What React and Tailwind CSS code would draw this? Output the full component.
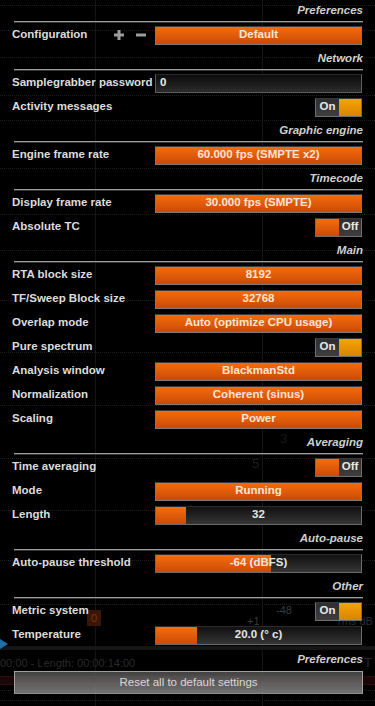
import React from 'react';

// Preferences panel drawn over a dimmed analyzer view.
const GRID_Y = [5, 30, 57, 95, 120, 168, 214, 250, 300, 352, 405, 458, 510, 560, 604, 690, 700];

function Backdrop() {
  return (
    <div className="pointer-events-none absolute inset-0 font-normal">
      {GRID_Y.map((y) => (
        <div key={y} className="absolute inset-x-0 border-t border-dotted border-[#1d1d1d]" style={{ top: y }} />
      ))}
      <div className="absolute inset-y-0 left-[95px] border-l border-[#141414]" />
      <div className="absolute inset-y-0 left-[262px] border-l border-[#161616]" />
      <span className="absolute left-[252px] top-[457px] text-[13px] text-[#1e1e1e]">5</span>
      <span className="absolute left-[280px] top-[432px] text-[13px] text-[#161616]">3</span>
      <span className="absolute left-[276px] top-[605px] text-[11px] text-[#3a3a3a]">-48</span>
      <span className="absolute left-[247px] top-[616px] text-[11px] text-[#3a3a3a]">+1</span>
      <span className="absolute left-[338px] top-[616px] text-[11px] text-[#2c2c3a]">rms dB</span>
      <div className="absolute left-[87px] top-[610px] flex h-[16px] w-[14px] items-center justify-center bg-[#3a1606] text-[11px] text-[#7a3410]">0</div>
      <div className="absolute inset-x-0 top-[646px] h-[4px] bg-[#161616]" />
      <div className="absolute left-0 top-[639px] h-0 w-0 border-y-[5px] border-l-[8px] border-y-transparent border-l-[#1f6fa8]" />
      <span className="absolute left-0 top-[658px] text-[11px] text-[#2a2a2a]">00:00 - Length: 00:00:14:00</span>
      <span className="absolute left-[364px] top-[656px] text-[13px] text-[#262626]">T</span>
      <div className="absolute inset-x-0 top-[676px] h-[9px] border-y border-dotted border-[#3a1414] bg-[#1a0606]" />
    </div>
  );
}

function Header({ title, first }) {
  return (
    <div className={`ml-[2px] -mr-px flex flex-col justify-end ${first ? 'h-[23px]' : 'h-[24px]'}`}>
      <div className="text-right italic leading-none text-[#cfcfcf]">{title}</div>
      <div className="mt-[5px] h-px bg-[#9a9a9a]" />
      <div className="h-px bg-[#3a3a3a]" />
    </div>
  );
}

function Row({ label, extra, children }) {
  return (
    <div className="flex h-6 items-center">
      <div className="flex w-[143px] shrink-0 items-center pr-2">
        <span className="whitespace-nowrap text-[#dcdcdc]">{label}</span>
        {extra}
      </div>
      <div className="flex min-w-0 flex-1 items-center">{children}</div>
    </div>
  );
}

function Select({ value }) {
  return (
    <div className="flex h-[19px] w-full items-center justify-center border border-[#7c7c7c] border-t-[#3c3c3c] bg-linear-to-b from-[#f66c0e] to-[#c94a05] text-[#fce6d6]">
      {value}
    </div>
  );
}

function Slider({ value, fill }) {
  return (
    <div className="relative flex h-[19px] w-full items-center justify-center border border-[#6a6a6a] border-t-[#2c2c2c] bg-linear-to-b from-[#121212] to-[#353535] text-[#e6e6e6]">
      <div className="absolute inset-y-0 left-0 bg-linear-to-b from-[#f66c0e] to-[#cc4c06]" style={{ width: fill }} />
      <span className="relative">{value}</span>
    </div>
  );
}

function Toggle({ on }) {
  return (
    <div className="ml-auto flex h-[19px] w-[47px] border border-[#6e6e6e] border-t-[#3a3a3a]">
      {on ? (
        <>
          <div className="flex w-[23px] items-center justify-center bg-linear-to-b from-[#2e2e2e] to-[#3e3e3e] text-[#e8e8e8]">On</div>
          <div className="flex-1 bg-linear-to-b from-[#f4a40a] to-[#d88400]" />
        </>
      ) : (
        <>
          <div className="w-[23px] bg-linear-to-b from-[#f66c0e] to-[#cc4c06]" />
          <div className="flex flex-1 items-center justify-center bg-linear-to-b from-[#2e2e2e] to-[#3e3e3e] text-[#e8e8e8]">Off</div>
        </>
      )}
    </div>
  );
}

function PlusMinus() {
  return (
    <div className="ml-auto flex items-center gap-[12px] pr-px">
      <svg width="10" height="10" viewBox="0 0 10 10">
        <path d="M5 0v10M0 5h10" stroke="#9c9c9c" strokeWidth="3" />
      </svg>
      <svg width="10" height="10" viewBox="0 0 10 10">
        <path d="M0 5h10" stroke="#9c9c9c" strokeWidth="3" />
      </svg>
    </div>
  );
}

export default function App() {
  return (
    <div className="relative h-[706px] w-[375px] overflow-hidden bg-black font-['Liberation_Sans',Arial,sans-serif] text-[11.5px] font-bold leading-none">
      <Backdrop />
      <div className="relative flex flex-col pl-3 pr-[13px]">
        <Header title="Preferences" first />
        <Row label="Configuration" extra={<PlusMinus />}>
          <Select value="Default" />
        </Row>

        <Header title="Network" />
        <Row label="Samplegrabber password">
          <div className="flex h-[19px] w-full items-center border border-[#5c5c5c] border-t-[#2a2a2a] bg-linear-to-b from-[#0c0c0c] to-[#2c2c2c] pl-1 text-[#eeeeee]">
            0
          </div>
        </Row>
        <Row label="Activity messages">
          <Toggle on />
        </Row>

        <Header title="Graphic engine" />
        <Row label="Engine frame rate">
          <Select value="60.000 fps (SMPTE x2)" />
        </Row>

        <Header title="Timecode" />
        <Row label="Display frame rate">
          <Select value="30.000 fps (SMPTE)" />
        </Row>
        <Row label="Absolute TC">
          <Toggle on={false} />
        </Row>

        <Header title="Main" />
        <Row label="RTA block size">
          <Select value="8192" />
        </Row>
        <Row label="TF/Sweep Block size">
          <Select value="32768" />
        </Row>
        <Row label="Overlap mode">
          <Select value="Auto (optimize CPU usage)" />
        </Row>
        <Row label="Pure spectrum">
          <Toggle on />
        </Row>
        <Row label="Analysis window">
          <Select value="BlackmanStd" />
        </Row>
        <Row label="Normalization">
          <Select value="Coherent (sinus)" />
        </Row>
        <Row label="Scaling">
          <Select value="Power" />
        </Row>

        <Header title="Averaging" />
        <Row label="Time averaging">
          <Toggle on={false} />
        </Row>
        <Row label="Mode">
          <Select value="Running" />
        </Row>
        <Row label="Length">
          <Slider value="32" fill={30} />
        </Row>

        <Header title="Auto-pause" />
        <Row label="Auto-pause threshold">
          <Slider value="-64 (dBFS)" fill={115} />
        </Row>

        <Header title="Other" />
        <Row label="Metric system">
          <Toggle on />
        </Row>
        <Row label="Temperature">
          <Slider value="20.0 (° c)" fill={41} />
        </Row>

        <div className="ml-[2px] -mr-px flex h-[24px] items-end justify-end pb-[6px] italic text-[#cfcfcf]">Preferences</div>
        <div className="ml-[2px] -mr-px flex h-[23px] items-center justify-center border border-[#a0a0a0] border-b-[#8a8a8a] bg-linear-to-b from-[#585858]/75 to-[#8e8e8e]/80 font-normal text-[#d8d8d8]">
          Reset all to default settings
        </div>
      </div>
    </div>
  );
}
